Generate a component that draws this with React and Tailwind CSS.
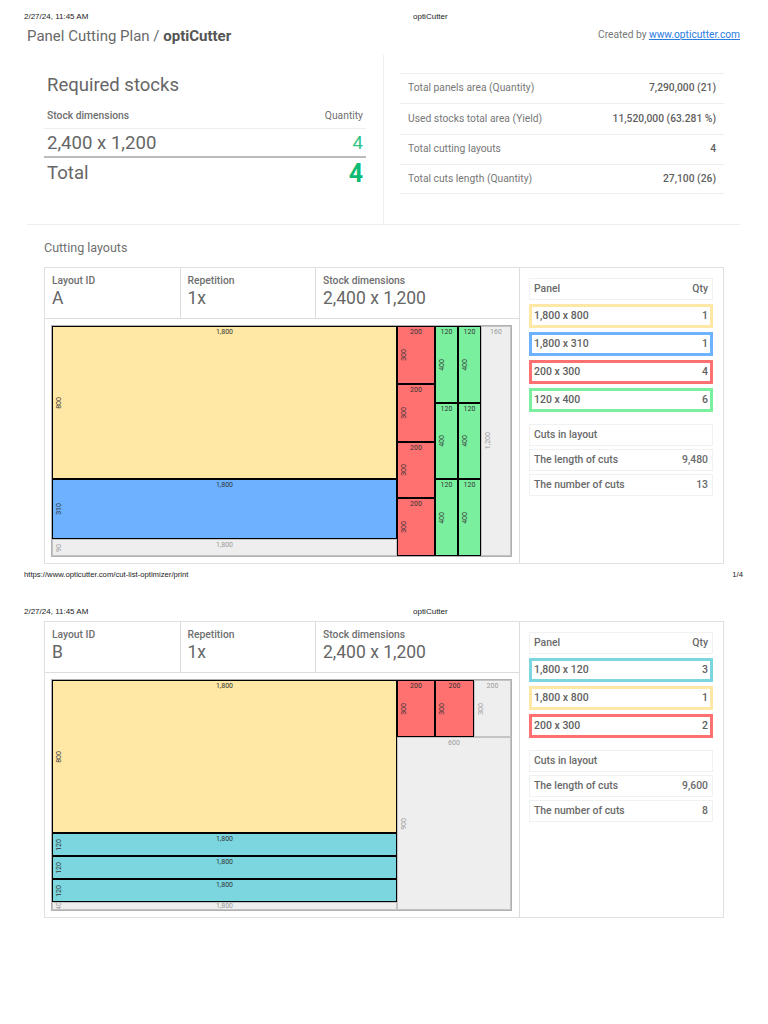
const YEL = "#ffe8a6";
const BLU = "#6cb2ff";
const RED = "#ff7070";
const GRN = "#7aef9e";
const CYA = "#7bd6e0";
const GRY = "#eeeeee";

const P = (x, y, w, h, color, top, left, waste, tight) => ({ x, y, w, h, color, top, left, waste, tight });

const layoutA = [
  P(0, 0, 345, 153, YEL, "1,800", "800"),
  P(0, 153, 345, 60, BLU, "1,800", "310"),
  P(0, 213, 345, 17, GRY, "1,800", "90", true),
  P(345, 0, 38, 58, RED, "200", "300"),
  P(345, 58, 38, 58, RED, "200", "300"),
  P(345, 116, 38, 56, RED, "200", "300"),
  P(345, 172, 38, 58, RED, "200", "300"),
  P(383, 0, 23, 77, GRN, "120", "400"),
  P(406, 0, 23, 77, GRN, "120", "400"),
  P(383, 77, 23, 76, GRN, "120", "400"),
  P(406, 77, 23, 76, GRN, "120", "400"),
  P(383, 153, 23, 77, GRN, "120", "400"),
  P(406, 153, 23, 77, GRN, "120", "400"),
  P(429, 0, 30, 230, GRY, "160", "1,200", true),
];

const layoutB = [
  P(0, 0, 345, 153, YEL, "1,800", "800"),
  P(0, 153, 345, 23, CYA, "1,800", "120"),
  P(0, 176, 345, 23, CYA, "1,800", "120"),
  P(0, 199, 345, 23, CYA, "1,800", "120"),
  P(0, 222, 345, 8, GRY, "1,800", "40", true, true),
  P(345, 0, 38, 57, RED, "200", "300"),
  P(383, 0, 39, 57, RED, "200", "300"),
  P(422, 0, 37, 57, GRY, "200", "300", true),
  P(345, 57, 114, 173, GRY, "600", "900", true),
];

function Piece({ p }) {
  const pos = { left: p.x, top: p.y, width: p.w, height: p.h, background: p.color };
  return (
    <div
      style={pos}
      className={`absolute overflow-hidden border ${p.waste ? "border-[#c4c4c4] text-[#9a9a9a]" : "border-black text-[#333333]"}`}
    >
      <div className={`text-center text-[7px] ${p.tight ? "leading-[6px]" : "pt-px leading-[8px]"}`}>{p.top}</div>
      <div className="absolute inset-y-0 left-[2px] flex items-center">
        <span className="rotate-180 text-[7px] leading-[8px] [writing-mode:vertical-rl]">{p.left}</span>
      </div>
    </div>
  );
}

function Cell({ label, value }) {
  return (
    <div className="flex h-full w-[135.5px] flex-col border-r border-[#dddddd] pl-[7px] pt-[6px]">
      <div className="text-[10.3px] font-medium leading-[13px] text-[#6f6f6f]">{label}</div>
      <div className="text-[17.5px] leading-[22px] text-[#666666]">{value}</div>
    </div>
  );
}

function Row({ left, right }) {
  return (
    <div className="flex h-[22px] items-center justify-between border border-[#f1f1f1] px-1 text-[10.4px] font-medium text-[#6a6a6a]">
      <span>{left}</span>
      <span>{right}</span>
    </div>
  );
}

function PanelRow({ color, left, right }) {
  return (
    <div
      style={{ borderColor: color }}
      className="flex h-[24px] items-center justify-between border-[3px] px-[2px] text-[10.5px] font-medium text-[#5f5f5f]"
    >
      <span>{left}</span>
      <span>{right}</span>
    </div>
  );
}

function LayoutCard({ id, pieces, panels, length, count }) {
  return (
    <div className="mx-[44px] flex h-[297px] w-[680px] border-[1.5px] border-[#e0e0e0]">
      <div className="flex w-[475px] flex-col border-r border-[#dddddd]">
        <div className="flex h-[51px] border-b border-[#dddddd]">
          <Cell label="Layout ID" value={id} />
          <Cell label="Repetition" value="1x" />
          <div className="pl-[7px] pt-[6px]">
            <div className="text-[10.3px] font-medium leading-[13px] text-[#6f6f6f]">Stock dimensions</div>
            <div className="text-[17.5px] leading-[22px] text-[#666666]">2,400 x 1,200</div>
          </div>
        </div>
        <div className="pl-[7px] pt-[7px]">
          <div className="relative h-[230px] w-[459px] outline outline-1 outline-[#b0b0b0]">
            {pieces.map((p, i) => (
              <Piece key={i} p={p} />
            ))}
          </div>
        </div>
      </div>
      <div className="w-[203px] pl-[9px] pr-[10px] pt-[10px]">
        <div className="flex flex-col gap-1">
          <Row left="Panel" right="Qty" />
          {panels.map((r) => (
            <PanelRow key={r[1]} color={r[0]} left={r[1]} right={r[2]} />
          ))}
        </div>
        <div className="mt-3 flex flex-col gap-[3px]">
          <Row left="Cuts in layout" right="" />
          <Row left="The length of cuts" right={length} />
          <Row left="The number of cuts" right={count} />
        </div>
      </div>
    </div>
  );
}

function PrintHeader() {
  return (
    <div className="flex pl-[24px] font-['Liberation_Sans',sans-serif] text-[8px] leading-[10px] text-[#222222]">
      <span className="w-[389px]">2/27/24, 11:45 AM</span>
      <span>optiCutter</span>
    </div>
  );
}

function StatRow({ label, value, h }) {
  return (
    <div className={`${h} flex items-center justify-between border-b border-[#eeeeee] px-2 pb-px text-[10.3px]`}>
      <span className="text-[#777777]">{label}</span>
      <span className="font-medium text-[#5f5f5f]">{value}</span>
    </div>
  );
}

export default function App() {
  return (
    <div className="h-[1024px] w-[768px] overflow-hidden bg-white font-['Roboto',sans-serif]">
      <div className="pt-[12px]">
        <PrintHeader />
      </div>
      <div className="mt-[3px] flex h-5 items-center justify-between pl-[27px] pr-[28px]">
        <div className="mt-[2px] text-[15px] text-[#6a6a6a]">
          Panel Cutting Plan / <span className="font-bold text-[#555555]">optiCutter</span>
        </div>
        <div className="text-[10.2px] text-[#777777]">
          Created by <a className="text-[#2b7de0] underline">www.opticutter.com</a>
        </div>
      </div>

      <div className="ml-[27px] mt-[10px] flex h-[170px] w-[713px] border-b border-[#eeeeee]">
        <div className="w-[357px] border-r border-[#eeeeee] pl-[17px] pr-[17px] pt-[18px]">
          <div className="pl-[3px] text-[18.5px] leading-6 text-[#666666]">Required stocks</div>
          <div className="mt-[7px] flex h-[25px] items-center justify-between border-b border-[#eeeeee] px-[3px] text-[10.3px] font-medium text-[#6f6f6f]">
            <span>Stock dimensions</span>
            <span className="font-normal">Quantity</span>
          </div>
          <div className="flex h-[29px] items-center justify-between border-b-2 border-[#bbbbbb] px-[3px] pt-[3px] text-[18.6px] text-[#666666]">
            <span>2,400 x 1,200</span>
            <span className="text-[#2fc486]">4</span>
          </div>
          <div className="flex h-[30px] items-center justify-between px-[3px] pt-[2px] text-[18.6px] text-[#666666]">
            <span>Total</span>
            <span className="text-[25px] font-bold text-[#0cbb73]">4</span>
          </div>
        </div>
        <div className="pl-[16px] pt-[18px]">
          <div className="w-[324px] border-t border-[#eeeeee]">
            <StatRow label="Total panels area (Quantity)" value="7,290,000 (21)" h="h-[30px]" />
            <StatRow label="Used stocks total area (Yield)" value="11,520,000 (63.281 %)" h="h-[31px]" />
            <StatRow label="Total cutting layouts" value="4" h="h-[30px]" />
            <StatRow label="Total cuts length (Quantity)" value="27,100 (26)" h="h-[29px]" />
          </div>
        </div>
      </div>

      <div className="ml-[44px] mt-[15px] text-[12.5px] leading-[16px] text-[#707070]">Cutting layouts</div>

      <div className="mt-[11px]">
        <LayoutCard
          id="A"
          pieces={layoutA}
          panels={[
            [YEL, "1,800 x 800", 1],
            [BLU, "1,800 x 310", 1],
            [RED, "200 x 300", 4],
            [GRN, "120 x 400", 6],
          ]}
          length="9,480"
          count="13"
        />
      </div>

      <div className="mt-[6px] flex justify-between pl-[24px] pr-[25px] font-['Liberation_Sans',sans-serif] text-[7.7px] leading-[10px] text-[#222222]">
        <span>https://www.opticutter.com/cut-list-optimizer/print</span>
        <span>1/4</span>
      </div>

      <div className="mt-[27px]">
        <PrintHeader />
      </div>
      <div className="mt-[4px]">
        <LayoutCard
          id="B"
          pieces={layoutB}
          panels={[
            [CYA, "1,800 x 120", 3],
            [YEL, "1,800 x 800", 1],
            [RED, "200 x 300", 2],
          ]}
          length="9,600"
          count="8"
        />
      </div>
    </div>
  );
}
